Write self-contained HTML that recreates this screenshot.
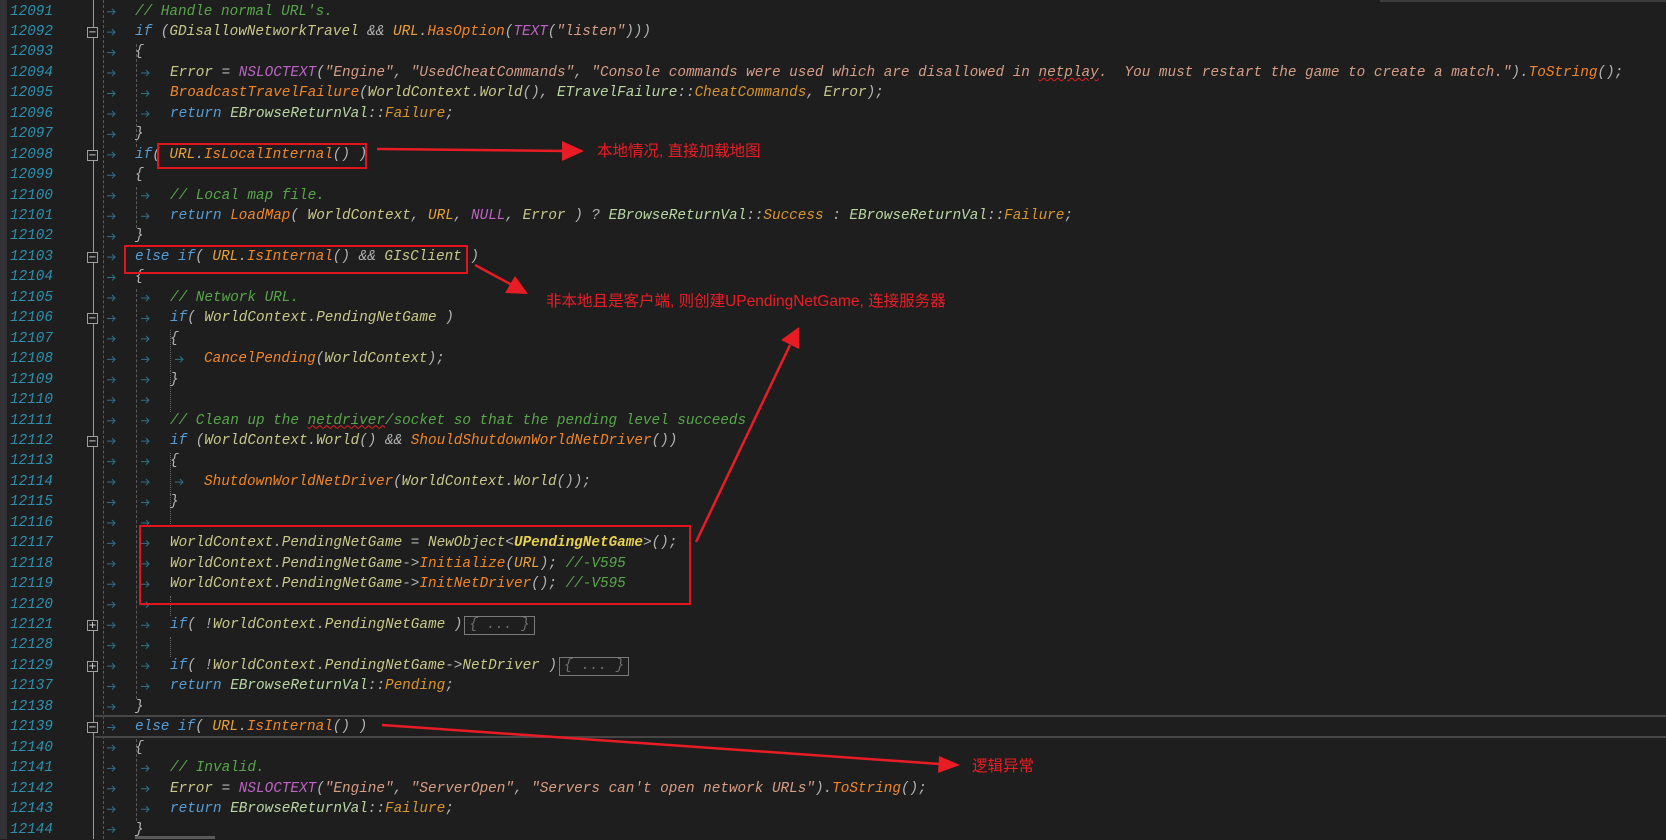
<!DOCTYPE html>
<html><head><meta charset="utf-8"><style>
body{margin:0;width:1666px;height:839px;background:#1e1e1e;overflow:hidden;position:relative;font-family:"Liberation Mono",monospace;}
.strip{position:absolute;left:0;top:0;width:7px;height:839px;background:#333337}
.r{position:absolute;left:0;height:20.45px;line-height:20.45px;font-size:14.33px;font-style:italic;white-space:pre;color:#b4b4b4}
.n{position:absolute;left:10px;color:#2b91af;top:0}
.code{position:absolute;top:0}
.k{color:#569cd6}.c{color:#57a64a}.f{color:#f0862a}.v{color:#c8c88a}.t{color:#b8d7a3}.e{color:#d8952e}.s{color:#d69d85}.m{color:#bd63c5}.u{color:#e8a03a}.b{color:#e6d050;font-weight:bold}
.w{text-decoration:underline wavy #e02020;text-decoration-thickness:1px}
.tab{position:absolute;top:0;color:#2e6f85;font-size:11px;font-style:normal}
.fold{position:absolute;left:87px;width:9px;height:9px;border:1px solid #a0a0a0;background:#1e1e1e;color:#e0e0e0;font-size:10px;line-height:9px;text-align:center;font-style:normal;font-family:"DejaVu Sans",sans-serif}
.col{display:inline-block;border:1px solid #7a7a7a;line-height:17px;padding:0 4px;color:#6e6e6e;margin-left:2px}
.dl{position:absolute;border-left:1px dashed #5a5a5a;width:0}
.dot{position:absolute;border-left:1px dotted #6a6a6a;width:0}
.box{position:absolute;border:2px solid #e0151d}
.note{position:absolute;color:#ee1c25;font-family:"Liberation Sans","Noto Sans CJK SC",sans-serif;font-size:15.5px;white-space:nowrap;line-height:18px}
</style></head><body>
<div class="strip"></div>
<div style="position:absolute;left:1380px;top:0;width:286px;height:2px;background:#3c3c3c"></div>
<div style="position:absolute;left:93px;top:0;width:1px;height:839px;background:#9a9a9a"></div>
<div class="dl" style="left:103px;top:0;height:839px"></div>
<div class="dl" style="left:136px;top:44px;height:103px"></div>
<div class="dl" style="left:136px;top:187px;height:41px"></div>
<div class="dl" style="left:136px;top:289px;height:410px"></div>
<div class="dl" style="left:136px;top:739px;height:82px"></div>
<div class="dot" style="left:170px;top:330px;height:41px"></div>
<div class="dot" style="left:170px;top:371px;height:41px"></div>
<div class="dot" style="left:170px;top:453px;height:41px"></div>
<div class="dot" style="left:170px;top:494px;height:30px"></div>
<div class="dot" style="left:170px;top:596px;height:20px"></div>
<div class="dot" style="left:170px;top:637px;height:20px"></div>
<div style="position:absolute;left:95px;top:715px;width:1571px;height:19px;border-top:2px solid #464646;border-bottom:2px solid #464646"></div>
<div style="position:absolute;left:135px;top:836px;width:80px;height:3px;background:#5a5a5a"></div>

<div id="rows"></div>
<div class="r" style="top:1.5px"><span class="n">12091</span><span class="code" style="left:135px"><span class="c">// Handle normal URL's.</span></span></div>
<div class="r" style="top:21.95px"><span class="n">12092</span><span class="code" style="left:135px"><span class="k">if</span> (<span class="v">GDisallowNetworkTravel</span> &amp;&amp; <span class="u">URL</span>.<span class="f">HasOption</span>(<span class="m">TEXT</span>(<span class="s">"listen"</span>)))</span></div>
<div class="r" style="top:42.4px"><span class="n">12093</span><span class="code" style="left:135px">{</span></div>
<div class="r" style="top:62.85px"><span class="n">12094</span><span class="code" style="left:170px"><span class="v">Error</span> = <span class="m">NSLOCTEXT</span>(<span class="s">"Engine"</span>, <span class="s">"UsedCheatCommands"</span>, <span class="s">"Console commands were used which are disallowed in <span class="w">netplay</span>.  You must restart the game to create a match."</span>).<span class="f">ToString</span>();</span></div>
<div class="r" style="top:83.3px"><span class="n">12095</span><span class="code" style="left:170px"><span class="f">BroadcastTravelFailure</span>(<span class="v">WorldContext</span>.<span class="v">World</span>(), <span class="t">ETravelFailure</span>::<span class="e">CheatCommands</span>, <span class="v">Error</span>);</span></div>
<div class="r" style="top:103.75px"><span class="n">12096</span><span class="code" style="left:170px"><span class="k">return</span> <span class="t">EBrowseReturnVal</span>::<span class="e">Failure</span>;</span></div>
<div class="r" style="top:124.2px"><span class="n">12097</span><span class="code" style="left:135px">}</span></div>
<div class="r" style="top:144.65px"><span class="n">12098</span><span class="code" style="left:135px"><span class="k">if</span>( <span class="u">URL</span>.<span class="f">IsLocalInternal</span>() )</span></div>
<div class="r" style="top:165.1px"><span class="n">12099</span><span class="code" style="left:135px">{</span></div>
<div class="r" style="top:185.55px"><span class="n">12100</span><span class="code" style="left:170px"><span class="c">// Local map file.</span></span></div>
<div class="r" style="top:206px"><span class="n">12101</span><span class="code" style="left:170px"><span class="k">return</span> <span class="f">LoadMap</span>( <span class="v">WorldContext</span>, <span class="u">URL</span>, <span class="m">NULL</span>, <span class="v">Error</span> ) ? <span class="t">EBrowseReturnVal</span>::<span class="e">Success</span> : <span class="t">EBrowseReturnVal</span>::<span class="e">Failure</span>;</span></div>
<div class="r" style="top:226.45px"><span class="n">12102</span><span class="code" style="left:135px">}</span></div>
<div class="r" style="top:246.9px"><span class="n">12103</span><span class="code" style="left:135px"><span class="k">else if</span>( <span class="u">URL</span>.<span class="f">IsInternal</span>() &amp;&amp; <span class="v">GIsClient</span> )</span></div>
<div class="r" style="top:267.35px"><span class="n">12104</span><span class="code" style="left:135px">{</span></div>
<div class="r" style="top:287.8px"><span class="n">12105</span><span class="code" style="left:170px"><span class="c">// Network URL.</span></span></div>
<div class="r" style="top:308.25px"><span class="n">12106</span><span class="code" style="left:170px"><span class="k">if</span>( <span class="v">WorldContext</span>.<span class="v">PendingNetGame</span> )</span></div>
<div class="r" style="top:328.7px"><span class="n">12107</span><span class="code" style="left:170px">{</span></div>
<div class="r" style="top:349.15px"><span class="n">12108</span><span class="code" style="left:204px"><span class="f">CancelPending</span>(<span class="v">WorldContext</span>);</span></div>
<div class="r" style="top:369.6px"><span class="n">12109</span><span class="code" style="left:170px">}</span></div>
<div class="r" style="top:390.05px"><span class="n">12110</span></div>
<div class="r" style="top:410.5px"><span class="n">12111</span><span class="code" style="left:170px"><span class="c">// Clean up the <span class="w">netdriver</span>/socket so that the pending level succeeds</span></span></div>
<div class="r" style="top:430.95px"><span class="n">12112</span><span class="code" style="left:170px"><span class="k">if</span> (<span class="v">WorldContext</span>.<span class="v">World</span>() &amp;&amp; <span class="f">ShouldShutdownWorldNetDriver</span>())</span></div>
<div class="r" style="top:451.4px"><span class="n">12113</span><span class="code" style="left:170px">{</span></div>
<div class="r" style="top:471.85px"><span class="n">12114</span><span class="code" style="left:204px"><span class="f">ShutdownWorldNetDriver</span>(<span class="v">WorldContext</span>.<span class="v">World</span>());</span></div>
<div class="r" style="top:492.3px"><span class="n">12115</span><span class="code" style="left:170px">}</span></div>
<div class="r" style="top:512.75px"><span class="n">12116</span></div>
<div class="r" style="top:533.2px"><span class="n">12117</span><span class="code" style="left:170px"><span class="v">WorldContext</span>.<span class="v">PendingNetGame</span> = <span class="v">NewObject</span>&lt;<span class="b">UPendingNetGame</span>&gt;();</span></div>
<div class="r" style="top:553.65px"><span class="n">12118</span><span class="code" style="left:170px"><span class="v">WorldContext</span>.<span class="v">PendingNetGame</span>-&gt;<span class="f">Initialize</span>(<span class="u">URL</span>); <span class="c">//-V595</span></span></div>
<div class="r" style="top:574.1px"><span class="n">12119</span><span class="code" style="left:170px"><span class="v">WorldContext</span>.<span class="v">PendingNetGame</span>-&gt;<span class="f">InitNetDriver</span>(); <span class="c">//-V595</span></span></div>
<div class="r" style="top:594.55px"><span class="n">12120</span></div>
<div class="r" style="top:615px"><span class="n">12121</span><span class="code" style="left:170px"><span class="k">if</span>( !<span class="v">WorldContext</span>.<span class="v">PendingNetGame</span> )<span class="col">{ ... }</span></span></div>
<div class="r" style="top:635.45px"><span class="n">12128</span></div>
<div class="r" style="top:655.9px"><span class="n">12129</span><span class="code" style="left:170px"><span class="k">if</span>( !<span class="v">WorldContext</span>.<span class="v">PendingNetGame</span>-&gt;<span class="v">NetDriver</span> )<span class="col">{ ... }</span></span></div>
<div class="r" style="top:676.35px"><span class="n">12137</span><span class="code" style="left:170px"><span class="k">return</span> <span class="t">EBrowseReturnVal</span>::<span class="e">Pending</span>;</span></div>
<div class="r" style="top:696.8px"><span class="n">12138</span><span class="code" style="left:135px">}</span></div>
<div class="r" style="top:717.25px"><span class="n">12139</span><span class="code" style="left:135px"><span class="k">else if</span>( <span class="u">URL</span>.<span class="f">IsInternal</span>() )</span></div>
<div class="r" style="top:737.7px"><span class="n">12140</span><span class="code" style="left:135px">{</span></div>
<div class="r" style="top:758.15px"><span class="n">12141</span><span class="code" style="left:170px"><span class="c">// Invalid.</span></span></div>
<div class="r" style="top:778.6px"><span class="n">12142</span><span class="code" style="left:170px"><span class="v">Error</span> = <span class="m">NSLOCTEXT</span>(<span class="s">"Engine"</span>, <span class="s">"ServerOpen"</span>, <span class="s">"Servers can't open network URLs"</span>).<span class="f">ToString</span>();</span></div>
<div class="r" style="top:799.05px"><span class="n">12143</span><span class="code" style="left:170px"><span class="k">return</span> <span class="t">EBrowseReturnVal</span>::<span class="e">Failure</span>;</span></div>
<div class="r" style="top:819.5px"><span class="n">12144</span><span class="code" style="left:135px">}</span></div>

<!-- tab arrows -->
<svg style="position:absolute;left:0;top:0" width="1666" height="839">
<g stroke="#2e7088" stroke-width="1" fill="none" id="arr"></g>
</svg>
<script>
(function(){
var lv=[1,1,1,2,2,2,1,1,1,2,2,1,1,1,2,2,2,3,2,0,2,2,2,3,2,0,2,2,2,0,2,0,2,2,1,1,1,2,2,2,1];
var g=document.getElementById('arr'),h='';
for(var i=0;i<41;i++){var y=11.7+i*20.45;var xs=[107,141,175];
for(var j=0;j<Math.max(lv[i]==0?2:lv[i],1);j++){var x=xs[j];if(j>=lv[i]&&lv[i]!=0)break;
h+='<path d="M'+x+' '+y+'h8M'+(x+5)+' '+(y-3)+'l3 3-3 3"/>';}}
g.innerHTML=h;
var f=[[1,'−'],[7,'−'],[12,'−'],[15,'−'],[21,'−'],[30,'+'],[32,'+'],[35,'−']];
f.forEach(function(a){var d=document.createElement('div');d.className='fold';d.style.top=(6.5+a[0]*20.45)+'px';d.textContent=a[1];document.body.appendChild(d);});
})();
</script>

<div class="box" style="left:157px;top:143px;width:206px;height:22px"></div>
<div class="box" style="left:124px;top:245px;width:340px;height:25px"></div>
<div class="box" style="left:139px;top:525px;width:548px;height:76px"></div>

<svg style="position:absolute;left:0;top:0" width="1666" height="839" fill="#e81c24" stroke="#e81c24">
<line x1="377" y1="149" x2="565" y2="151" stroke-width="2.5"/>
<polygon points="584,151 562,141 562,161" stroke="none"/>
<line x1="475" y1="265" x2="512" y2="285" stroke-width="2.5"/>
<polygon points="528,294 505,293 515,276" stroke="none"/>
<line x1="696" y1="542" x2="790" y2="345" stroke-width="2.5"/>
<polygon points="799,327 781,340 799,349" stroke="none"/>
<line x1="382" y1="725" x2="940" y2="764" stroke-width="2.5"/>
<polygon points="960,765 939,756 938,773" stroke="none"/>
</svg>
<div class="note" style="left:597px;top:143px">本地情况, 直接加载地图</div>
<div class="note" style="left:546px;top:293px">非本地且是客户端, 则创建UPendingNetGame, 连接服务器</div>
<div class="note" style="left:972px;top:758px">逻辑异常</div>
</body></html>
